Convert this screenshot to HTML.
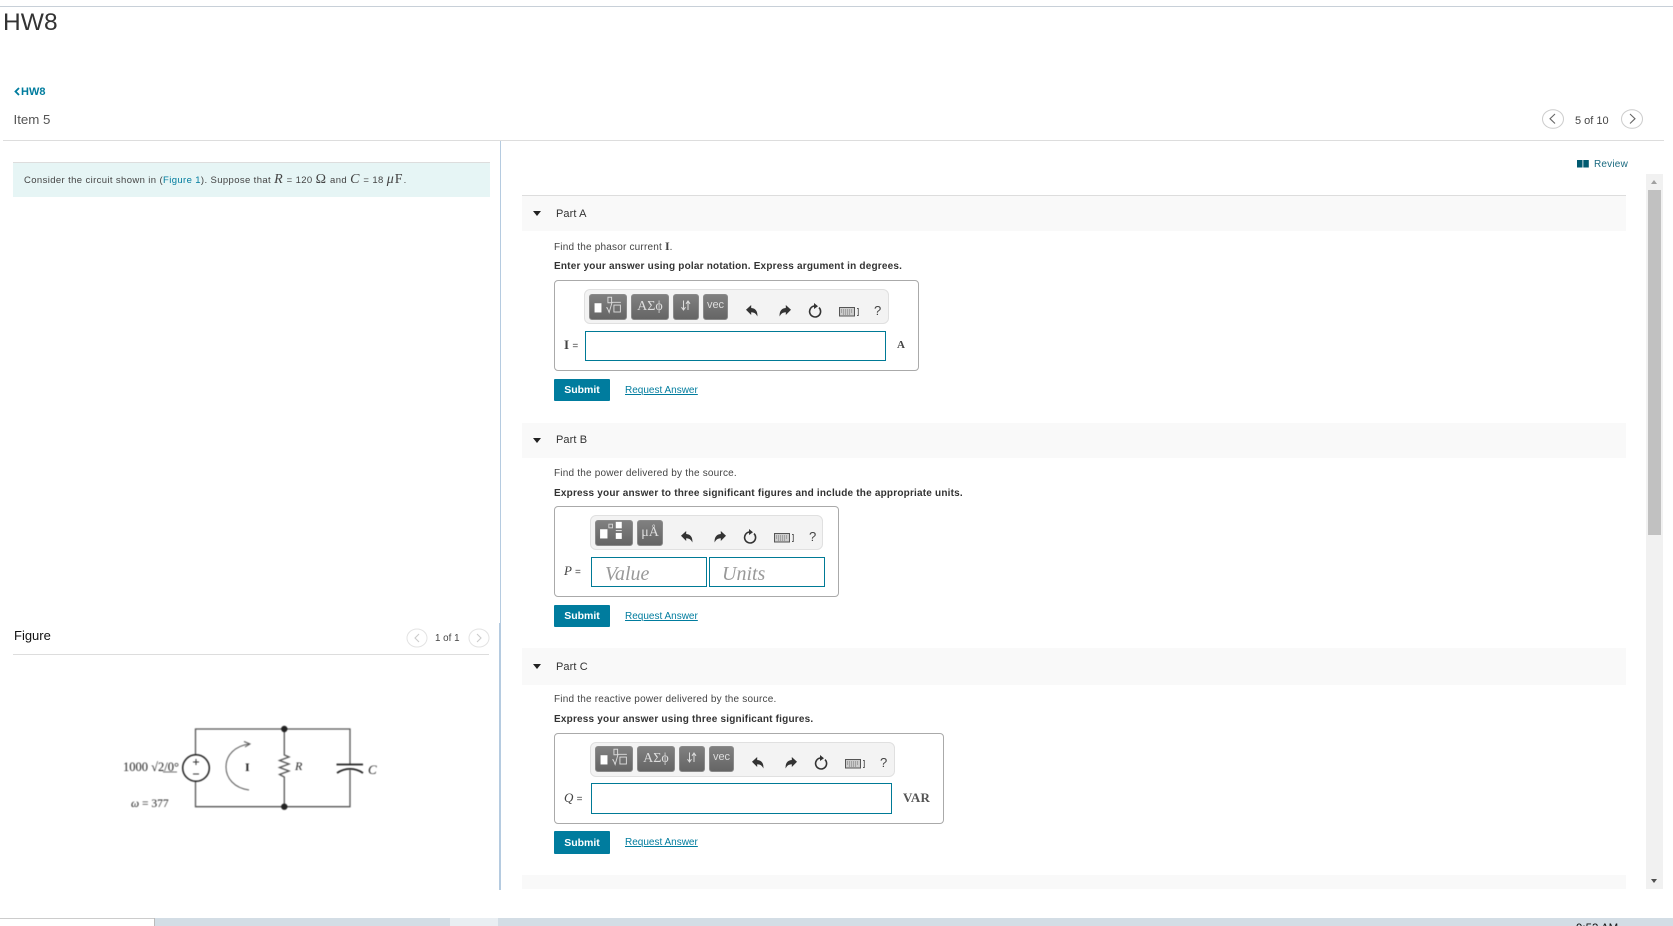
<!DOCTYPE html>
<html lang="en"><head><meta charset="utf-8"><title>HW8 Item 5</title>
<style>
html,body{margin:0;padding:0;width:1673px;height:926px;overflow:hidden;background:#fff}
body{position:relative;font-family:"Liberation Sans",Arial,sans-serif;color:#444}
.a,.t,.btn{position:absolute}
.t{white-space:nowrap;line-height:14px;font-size:10px;letter-spacing:.2px}
.b{font-weight:700;color:#333;letter-spacing:.2px}
.m{font-family:"Liberation Serif",serif}
.hd{position:absolute;left:522px;width:1104px;background:#f9f9f9}
.tri{position:absolute;left:533px;width:0;height:0;border-left:4.5px solid transparent;border-right:4.5px solid transparent;border-top:5px solid #222}
.pt{position:absolute;left:556px;font-size:11px;line-height:14px;color:#333;white-space:nowrap;letter-spacing:.1px}
.box{position:absolute;border:1px solid #aaa;border-radius:4px;box-sizing:border-box;background:#fff}
.bar{position:absolute;height:35px;background:#f3f3f3;border:1px solid #e0e0e0;border-radius:6px;box-sizing:border-box}
.btn{top:4px;height:26px;box-sizing:border-box;border-radius:3px;background:linear-gradient(#808080,#656565);border:1px solid #8a8a8a;color:#ddd;text-align:center}
.inp{position:absolute;box-sizing:border-box;border:1.5px solid #007a96;background:#fff}
.sub{position:absolute;width:56px;height:22px;background:#007c9e;border-radius:1px;color:#fff;font-weight:700;font-size:10.500px;line-height:23px;text-align:center}
.req{position:absolute;font-size:10px;line-height:14px;color:#007c9e;text-decoration:underline;white-space:nowrap;letter-spacing:0;font-weight:400}
.ph{font-family:"Liberation Serif",serif;font-style:italic;font-size:20px;color:#999;position:absolute;top:3.500px;line-height:24px}
.ic{position:absolute;overflow:visible}
.mm{font-family:"Liberation Serif",serif;font-size:14px;letter-spacing:1px}
</style></head><body>
<svg width="0" height="0" style="position:absolute"><defs>
<symbol id="undo" viewBox="0 0 12 12"><path d="M0 4.800 5.200 0V3C9.400 3.200 11.800 6.200 11.400 11.500 10.200 8.700 8.300 7.300 5.200 7.200V10Z" fill="#333"/></symbol>
<symbol id="redo" viewBox="0 0 12 12"><path d="M12 4.800 6.800 0V3C2.600 3.200.2 6.200.6 11.500 1.800 8.700 3.700 7.300 6.800 7.200V10Z" fill="#333"/></symbol>
<symbol id="reset" viewBox="0 0 14 15"><path d="M11 4.600A5.500 5.500 0 1 1 6.500 3" fill="none" stroke="#333" stroke-width="1.600"/><path d="M6 0 10 3.200 6 6Z" fill="#333"/></symbol>
<symbol id="kb" viewBox="0 0 20 10"><rect x=".5" y=".5" width="15" height="8.500" fill="#ccc" stroke="#555"/><path d="M2 3h12M2 5h12M4 7h8" stroke="#777" stroke-width="1" stroke-dasharray="1 1"/><path d="M18 1.500h1.300v7H18" fill="none" stroke="#555" stroke-width=".9"/></symbol>
<symbol id="templ" viewBox="0 0 38 26"><rect x="5.500" y="10" width="7.500" height="10" fill="#fff"/><rect x="20" y="3.500" width="4" height="6" fill="none" stroke="#ddd" stroke-width="1"/><path d="M18 15h1.300l2 5 3.200-11H34" fill="none" stroke="#ddd" stroke-width="1"/><rect x="26.500" y="12" width="7" height="7.500" fill="none" stroke="#ddd" stroke-width="1"/></symbol>
<symbol id="unit" viewBox="0 0 38 26"><rect x="5" y="10" width="8" height="10" fill="#fff"/><rect x="14.500" y="4.500" width="4" height="4" fill="none" stroke="#ddd" stroke-width=".9"/><rect x="22" y="2" width="6.500" height="7" fill="#fff"/><rect x="22" y="11" width="6.500" height="1" fill="#eee"/><rect x="22" y="14" width="6.500" height="6.500" fill="#fff"/></symbol>
<symbol id="arrows" viewBox="0 0 24 24"><path d="M9.500 5.500V14.500M7.500 12.200 9.500 15 11.500 12.200M14 15V6M12 8.800 14 6 16 8.800" fill="none" stroke="#ddd" stroke-width="1"/></symbol>
</defs></svg>

<!-- Page chrome -->
<div class="a" style="left:0;top:6px;width:1673px;height:1px;background:#c8d0d8"></div>
<div class="t" style="left:3px;top:8px;font-size:24.500px;line-height:30px;color:#333;letter-spacing:.1px">HW8</div>
<svg class="ic" style="left:14px;top:87px" width="6" height="9"><path d="M5 1 1.500 4.500 5 8" fill="none" stroke="#007c9e" stroke-width="1.800"/></svg>
<div class="t" style="left:21px;top:84.500px;font-size:11px;font-weight:700;color:#007c9e;letter-spacing:0">HW8</div>
<div class="t" style="left:13.500px;top:113px;font-size:13.300px;color:#555;letter-spacing:0">Item 5</div>
<div class="a" style="left:3px;top:140px;width:1661px;height:1px;background:#ddd"></div>
<div class="a" style="left:500px;top:141px;width:1px;height:482px;background:#b5cbe0"></div>
<div class="a" style="left:499px;top:623px;width:2px;height:267px;background:#b5cbe0"></div>

<svg class="ic" style="left:1542px;top:109px" width="22" height="20"><ellipse cx="11" cy="10" rx="10.500" ry="9.300" fill="#fff" stroke="#ccc"/><path d="M13 5 8 9.700 13 14.500" fill="none" stroke="#666" stroke-width="1.100"/></svg>
<div class="t" style="left:1575px;top:113.500px;font-size:11px;letter-spacing:0">5 of 10</div>
<svg class="ic" style="left:1621px;top:109px" width="22" height="20"><ellipse cx="11" cy="10" rx="10.500" ry="9.300" fill="#fff" stroke="#ccc"/><path d="M9 5 14 9.700 9 14.500" fill="none" stroke="#666" stroke-width="1.100"/></svg>

<svg class="ic" style="left:1577px;top:159px" width="12" height="9"><rect x="0" y="1" width="5.500" height="7.500" fill="#005a70"/><rect x="6.300" y="1" width="5.500" height="7.500" fill="#005a70"/></svg>
<div class="t" style="left:1594px;top:158px;font-size:10px;color:#1a6a80;letter-spacing:.2px">Review</div>

<div class="a" style="left:1646px;top:174px;width:17px;height:715px;background:#f1f1f1"></div>
<div class="a" style="left:1648px;top:190px;width:13px;height:345px;background:#c1c1c1"></div>
<div class="a" style="left:1651px;top:180px;width:0;height:0;border-left:3.500px solid transparent;border-right:3.500px solid transparent;border-bottom:4px solid #a0a0a0"></div>
<div class="a" style="left:1651px;top:879px;width:0;height:0;border-left:3.500px solid transparent;border-right:3.500px solid transparent;border-top:4px solid #505050"></div>

<!-- Left column -->
<div class="a" style="left:13px;top:162px;width:477px;height:35px;background:#e6f5f5;border-top:1px solid #ddd;box-sizing:border-box"></div>
<div class="t" style="left:24px;top:173px;font-size:9.500px;letter-spacing:.38px">Consider the circuit shown in (<span style="color:#007c9e">Figure 1</span>). Suppose that <i class="mm">R</i> = 120 <span class="mm">Ω</span> and <i class="mm">C</i> = 18 <span class="mm"><i>μ</i>F</span>.</div>

<div class="t" style="left:14px;top:629px;font-size:13px;color:#111;letter-spacing:0">Figure</div>
<svg class="ic" style="left:406px;top:628px" width="22" height="20"><ellipse cx="11" cy="10" rx="10" ry="9" fill="#fff" stroke="#e3e3e3"/><path d="M13 6 9 10 13 14" fill="none" stroke="#ccc" stroke-width="1.100"/></svg>
<div class="t" style="left:435px;top:632px;font-size:9.800px;letter-spacing:0">1 of 1</div>
<svg class="ic" style="left:468px;top:628px" width="22" height="20"><ellipse cx="11" cy="10" rx="10" ry="9" fill="#fff" stroke="#e3e3e3"/><path d="M9 6 13 10 9 14" fill="none" stroke="#ccc" stroke-width="1.100"/></svg>
<div class="a" style="left:13px;top:654px;width:476px;height:1px;background:#ddd"></div>

<svg class="ic" style="left:100px;top:700px;filter:blur(.4px)" width="300" height="140" viewBox="100 700 300 140">
<g fill="none" stroke="#555" stroke-width="1.300">
<path d="M195.500 755V729H350V764M350 770V806.700H195.500V781"/>
<path d="M284.300 729V755L289 757 279.500 760.500 289 764 279.500 767.500 289 771 279.500 774.500 284.300 777V806.700"/>
<path d="M249 790C234 788 226 778 226 767 226 755 235 746 249 744" stroke-width="1"/>
<path d="M244 741.500 250 744 245 747" stroke-width="1"/>
</g>
<circle cx="196" cy="768" r="13.300" fill="#fff" stroke="#222" stroke-width="1.500"/>
<circle cx="284.300" cy="729" r="3.200" fill="#222"/><circle cx="284.300" cy="806.700" r="3.200" fill="#222"/>
<path d="M336.500 764.500H363" stroke="#222" stroke-width="1.700" fill="none"/>
<path d="M337 773C345 767.500 355 767.500 363 773" stroke="#222" stroke-width="1.700" fill="none"/>
<path d="M196 759v6M193 762h6M193 774h6" stroke="#333" stroke-width="1" fill="none"/>
<g font-family="'Liberation Serif',serif" fill="#222">
<text x="123" y="771" font-size="12.500">1000 √2/0°</text>
<path d="M163 772h14" stroke="#333" stroke-width=".7" fill="none"/>
<text x="131" y="807" font-size="11.500"><tspan font-style="italic">ω</tspan> = 377</text>
<text x="245" y="771" font-size="12" font-weight="700">I</text>
<text x="295" y="770" font-size="12" font-style="italic">R</text>
<text x="368" y="774" font-size="13" font-style="italic">C</text>
</g>
</svg>

<!-- Part A -->
<div class="hd" style="top:195px;height:36px;border-top:1px solid #ddd;box-sizing:border-box"></div>
<div class="tri" style="top:211px"></div>
<div class="pt" style="top:206.500px">Part A</div>
<div class="t" style="left:554px;top:239px">Find the phasor current <span class="m" style="font-weight:700;font-size:12px;letter-spacing:0">I</span>.</div>
<div class="t b" style="left:554px;top:260px">Enter your answer using polar notation. Express argument in degrees.</div>
<div class="box" style="left:554px;top:280px;width:365px;height:91px"></div>
<div class="bar" style="left:584px;top:289px;width:305px">
  <div class="btn" style="left:4px;width:38px"><svg width="36" height="24" viewBox="1 1 36 24"><use href="#templ"/></svg></div>
  <div class="btn m" style="left:46px;width:38px;font-size:14px;line-height:23px">ΑΣϕ</div>
  <div class="btn" style="left:88px;width:26px"><svg width="24" height="24" viewBox="0 0 24 24"><use href="#arrows"/></svg></div>
  <div class="btn" style="left:118px;width:25px;font-size:11px;line-height:20px">vec</div>
  <svg class="ic" style="left:161px;top:15px" width="12" height="12"><use href="#undo"/></svg>
  <svg class="ic" style="left:194px;top:15px" width="12" height="12"><use href="#redo"/></svg>
  <svg class="ic" style="left:223px;top:13px" width="14" height="15"><use href="#reset"/></svg>
  <svg class="ic" style="left:254px;top:17px" width="20" height="10"><use href="#kb"/></svg>
  <div class="t" style="left:289px;top:14px;font-size:13px;color:#444">?</div>
</div>
<div class="t m" style="left:564px;top:338px;font-size:13px;font-weight:700;letter-spacing:0">I <span style="font-family:'Liberation Sans';font-weight:400;font-size:10px">=</span></div>
<div class="inp" style="left:585px;top:331px;width:301px;height:30px"></div>
<div class="t m" style="left:897px;top:338px;font-size:11px;font-weight:700;letter-spacing:0">A</div>
<div class="sub" style="left:554px;top:379px">Submit</div>
<div class="req" style="left:625px;top:384px">Request Answer</div>

<!-- Part B -->
<div class="hd" style="top:423px;height:35px"></div>
<div class="tri" style="top:438px"></div>
<div class="pt" style="top:433px">Part B</div>
<div class="t" style="left:554px;top:467px">Find the power delivered by the source.</div>
<div class="t b" style="left:554px;top:487px">Express your answer to three significant figures and include the appropriate units.</div>
<div class="box" style="left:554px;top:506px;width:285px;height:91px"></div>
<div class="bar" style="left:590px;top:515px;width:233px">
  <div class="btn" style="left:4px;width:38px"><svg width="36" height="24" viewBox="1 1 36 24"><use href="#unit"/></svg></div>
  <div class="btn m" style="left:46px;width:26px;font-size:14px;line-height:24px">μÅ</div>
  <svg class="ic" style="left:90px;top:15px" width="12" height="12"><use href="#undo"/></svg>
  <svg class="ic" style="left:123px;top:15px" width="12" height="12"><use href="#redo"/></svg>
  <svg class="ic" style="left:152px;top:13px" width="14" height="15"><use href="#reset"/></svg>
  <svg class="ic" style="left:183px;top:17px" width="20" height="10"><use href="#kb"/></svg>
  <div class="t" style="left:218px;top:14px;font-size:13px;color:#444">?</div>
</div>
<div class="t m" style="left:564px;top:564px;font-size:13px;font-style:italic;letter-spacing:0">P <span style="font-family:'Liberation Sans';font-style:normal;font-size:10px">=</span></div>
<div class="inp" style="left:591px;top:557px;width:116px;height:30px"><span class="ph" style="left:13px">Value</span></div>
<div class="inp" style="left:709px;top:557px;width:116px;height:30px"><span class="ph" style="left:12px">Units</span></div>
<div class="sub" style="left:554px;top:605px">Submit</div>
<div class="req" style="left:625px;top:610px">Request Answer</div>

<!-- Part C -->
<div class="hd" style="top:648px;height:37px"></div>
<div class="tri" style="top:664px"></div>
<div class="pt" style="top:659.500px">Part C</div>
<div class="t" style="left:554px;top:693px">Find the reactive power delivered by the source.</div>
<div class="t b" style="left:554px;top:713px">Express your answer using three significant figures.</div>
<div class="box" style="left:554px;top:733px;width:390px;height:91px"></div>
<div class="bar" style="left:590px;top:742px;width:305px">
  <div class="btn" style="top:3px;left:4px;width:38px"><svg width="36" height="24" viewBox="1 1 36 24"><use href="#templ"/></svg></div>
  <div class="btn m" style="top:3px;left:46px;width:38px;font-size:14px;line-height:23px">ΑΣϕ</div>
  <div class="btn" style="top:3px;left:88px;width:26px"><svg width="24" height="24" viewBox="0 0 24 24"><use href="#arrows"/></svg></div>
  <div class="btn" style="top:3px;left:118px;width:25px;font-size:11px;line-height:20px">vec</div>
  <svg class="ic" style="left:161px;top:14px" width="12" height="12"><use href="#undo"/></svg>
  <svg class="ic" style="left:194px;top:14px" width="12" height="12"><use href="#redo"/></svg>
  <svg class="ic" style="left:223px;top:12px" width="14" height="15"><use href="#reset"/></svg>
  <svg class="ic" style="left:254px;top:16px" width="20" height="10"><use href="#kb"/></svg>
  <div class="t" style="left:289px;top:13px;font-size:13px;color:#444">?</div>
</div>
<div class="t m" style="left:564px;top:791px;font-size:13px;font-style:italic;letter-spacing:0">Q <span style="font-family:'Liberation Sans';font-style:normal;font-size:10px">=</span></div>
<div class="inp" style="left:591px;top:783px;width:301px;height:31px"></div>
<div class="t m" style="left:903px;top:791px;font-size:13px;font-weight:700;letter-spacing:.2px;color:#555">VAR</div>
<div class="sub" style="left:554px;top:831px;height:23px;line-height:24px">Submit</div>
<div class="req" style="left:625px;top:836px">Request Answer</div>

<div class="hd" style="top:875px;height:14px"></div>

<!-- Bottom strip -->
<div class="a" style="left:0;top:918px;width:154px;height:1px;background:#ccc"></div>
<div class="a" style="left:154px;top:918px;width:1px;height:8px;background:#bbb"></div>
<div class="a" style="left:155px;top:918px;width:1518px;height:8px;background:#d3dde5;overflow:hidden">
  <div class="a" style="left:295px;top:0;width:48px;height:8px;background:#e9eef2"></div>
  <div class="t" style="left:1421px;top:4px;font-size:11.500px;color:#111;letter-spacing:0">9:53 AM</div>
</div>
</body></html>
